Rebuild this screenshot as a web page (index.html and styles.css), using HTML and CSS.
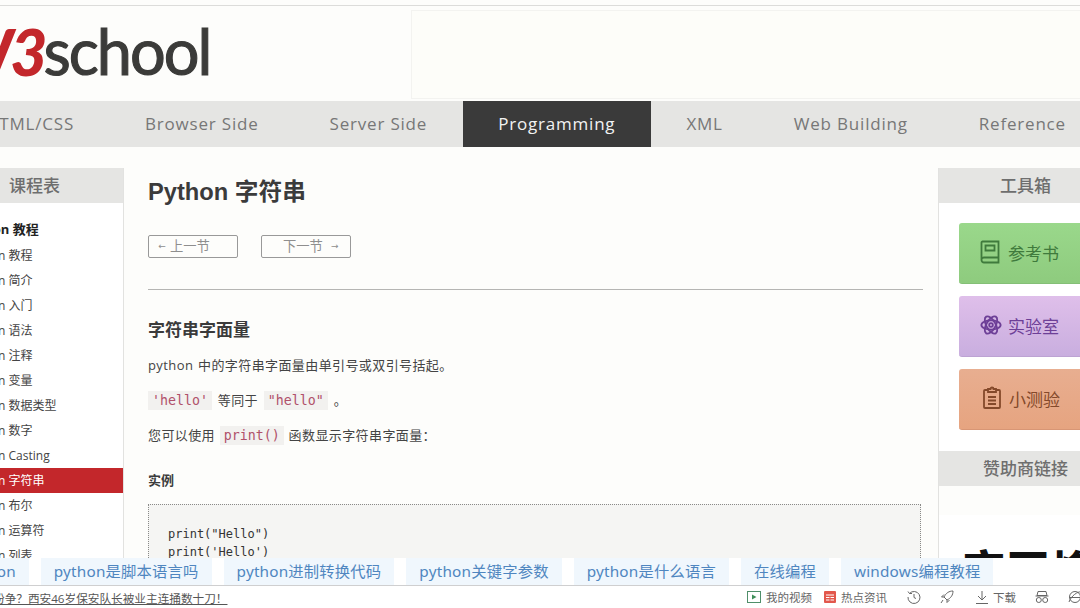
FILE: index.html
```html
<!DOCTYPE html>
<html lang="zh">
<head>
<meta charset="utf-8">
<title>Python 字符串</title>
<link rel="stylesheet" href="styles.css">
</head>
<body>
<div class="viewport">
  <div class="page">
    <header class="masthead">
      <div class="logo"><span class="logo-mark">W3</span><span class="logo-word">school</span></div>
      <div class="ad-top"></div>
    </header>
    <nav class="nav">
      <a>HTML/CSS</a><a>Browser Side</a><a>Server Side</a><a class="on">Programming</a><a>XML</a><a>Web Building</a><a>Reference</a>
    </nav>
    <div class="columns">
      <aside class="left">
        <h2 class="side-title left-title">课程表</h2>
        <ul class="lessons">
          <li class="head">Python 教程</li>
          <li>Python 教程</li>
          <li>Python 简介</li>
          <li>Python 入门</li>
          <li>Python 语法</li>
          <li>Python 注释</li>
          <li>Python 变量</li>
          <li>Python 数据类型</li>
          <li>Python 数字</li>
          <li>Python Casting</li>
          <li class="current">Python 字符串</li>
          <li>Python 布尔</li>
          <li>Python 运算符</li>
          <li>Python 列表</li>
        </ul>
      </aside>
      <main class="content">
        <h1>Python 字符串</h1>
        <div class="pager">
          <a class="btn prev"><span class="arrow">←</span>上一节</a>
          <a class="btn next">下一节<span class="arrow">→</span></a>
        </div>
        <hr class="rule">
        <h2 class="section">字符串字面量</h2>
        <p class="p1">python 中的字符串字面量由单引号或双引号括起。</p>
        <p class="p2"><code>'hello'</code> 等同于 <code>"hello"</code> 。</p>
        <p>您可以使用 <code>print()</code> 函数显示字符串字面量：</p>
        <h3 class="example">实例</h3>
        <pre class="sample">print("Hello")
print('Hello')</pre>
      </main>
      <aside class="right">
        <h2 class="side-title toolbox">工具箱</h2>
        <div class="tools">
          <a class="tool green">
            <svg viewBox="0 0 20 24" class="ico"><path d="M1.500 20V2.500a1 1 0 0 1 1-1h16v21H4a2.500 2.500 0 0 1-2.500-2.500a2.500 2.500 0 0 1 2.500-2.500h14.500M5.500 5.500h9v5h-9z"/></svg>参考书</a>
          <a class="tool purple">
            <svg viewBox="0 0 24 24" class="ico atom"><ellipse cx="12" cy="12" rx="10.500" ry="5"/><ellipse cx="12" cy="12" rx="10.500" ry="5" transform="rotate(60 12 12)"/><ellipse cx="12" cy="12" rx="10.500" ry="5" transform="rotate(120 12 12)"/><circle cx="12" cy="12" r="2"/></svg>实验室</a>
          <a class="tool orange">
            <svg viewBox="0 0 20 24" class="ico clip"><path d="M6 4H3a1 1 0 0 0-1 1v16a1 1 0 0 0 1 1h14a1 1 0 0 0 1-1V5a1 1 0 0 0-1-1h-3M6 6V3h2.500a1.500 1.500 0 0 1 3 0H14v3zM6 11h8M6 14.500h8M6 18h8"/></svg>小测验</a>
        </div>
        <h2 class="side-title sponsor">赞助商链接</h2>
        <div class="ad-side">宝玉烽</div>
      </aside>
    </div>
  </div>
  <div class="chips">
    <a class="chip">python</a><a class="chip">python是脚本语言吗</a><a class="chip">python进制转换代码</a><a class="chip">python关键字参数</a><a class="chip">python是什么语言</a><a class="chip">在线编程</a><a class="chip">windows编程教程</a>
  </div>
  <footer class="status">
    <a class="headline">纷争？西安46岁保安队长被业主连捅数十刀！</a>
    <div class="status-tools">
      <span class="st video"><svg viewBox="0 0 14 14" class="st-ico"><rect x=".5" y="1.500" width="13" height="11"/><path class="fill-green" d="M5 4.500l4.500 2.500L5 9.500z"/></svg>我的视频</span>
      <span class="st news"><svg viewBox="0 0 12 12" class="st-ico"><rect class="fill-red" width="12" height="12" rx="1"/><path class="cut" d="M2 4h8M2 6.500h3.500M6.500 6.500H10M2 9h3.500M6.500 9H10"/></svg>热点资讯</span>
      <svg viewBox="0 0 14 14" class="st-ico clock"><path d="M2.500 3.500A6 6 0 1 1 1 7M1 1.500l1.500 2L5 3.500M7 4v3.500l2 1"/></svg>
      <svg viewBox="0 0 14 14" class="st-ico rocket"><path d="M13 1C9 1 6 3 4 7l3 3c4-2 6-5 6-9zM4 7H1.500L4 4.500M7 10v2.500L9.500 10M3 10l-2 3"/></svg>
      <span class="st dl"><svg viewBox="0 0 12 13" class="st-ico"><path d="M6 0v9M2 5l4 4 4-4M0 12.500h12"/></svg>下载</span>
      <svg viewBox="0 0 14 14" class="st-ico glasses"><path d="M3 1.500h8l1 4H2zM0.500 6h13"/><circle cx="3.800" cy="10" r="2.500"/><circle cx="10.200" cy="10" r="2.500"/></svg>
      <svg viewBox="0 0 14 14" class="st-ico last"><circle cx="7" cy="7" r="5.500"/><path d="M1.500 7.500h11M13 2C10 1 3 6 1 12"/></svg>
    </div>
  </footer>
</div>
</body>
</html>
```
FILE: styles.css
```css
* { box-sizing: border-box; }
html, body { margin: 0; padding: 0; height: 100%; overflow: hidden; }
body { background: #fdfdfb; color: #3b3b3b; font-family: "Open Sans", "Noto Sans CJK SC", sans-serif; }
a { color: inherit; text-decoration: none; }
h1, h2, h3, p, ul, pre { margin: 0; padding: 0; }

.viewport { width: 1080px; height: 608px; display: flex; flex-direction: column; overflow: hidden; }
.page { flex: 1; min-height: 0; overflow: hidden; width: 1152px; margin-left: -37px; padding-top: 5px; }

.masthead { display: flex; height: 96px; border-top: 1px solid #dcdcda; }
.logo { width: 448px; height: 95px; display: flex; align-items: center; white-space: nowrap; font-family: "Lato", "Liberation Sans", sans-serif; }
.logo-mark { font-size: 64px; font-weight: 900; font-style: italic; color: #c3272b; letter-spacing: -3px; margin: -4px 0 0 -12px; }
.logo-word { font-size: 63px; font-weight: 400; color: #3b3b39; letter-spacing: -2px; margin-left: -1px; margin-top: -7px; -webkit-text-stroke: 1.100px #3b3b39; }
.ad-top { flex: 1; height: 89px; margin-top: 4px; border: 1px solid #f3f3f0; background: #fdfdf9; }

.nav { height: 46px; background: #e5e5e3; display: flex; font-size: 17px; letter-spacing: .8px; color: #777; }
.nav a { padding: 0 35.500px; line-height: 46px; white-space: nowrap; }
.nav a:first-child { padding-left: 23px; }
.nav a.on { background: #3a3a3a; color: #f2f2f2; }

.columns { display: flex; padding-top: 21px; }
.left { width: 161px; flex: none; border-right: 1px solid #e2e2e0; background: #fdfdfb; height: 420px; }
.side-title { height: 35px; line-height: 35px; background: #e5e5e3; font-size: 17px; font-weight: 500; color: #6e6e6e; }
.left-title { padding-left: 46px; }
.toolbox { padding-left: 61px; }
.sponsor { padding-left: 44px; }
.lessons { list-style: none; padding-top: 14px; font-size: 12px; color: #444; background: #fff; height: 385px; }
.lessons li { height: 25px; line-height: 25px; white-space: nowrap; padding-left: 3px; }
.lessons .head { font-weight: 700; font-size: 13px; color: #222; height: 26px; line-height: 24px; padding-left: 0; }
.lessons .current { background: #c3272b; color: #fff; }

.content { width: 775px; margin-left: 24px; flex: none; font-size: 13px; letter-spacing: .4px; word-spacing: 1px; }
.content h1 { font-family: "Liberation Sans", "Noto Sans CJK SC", sans-serif; font-size: 23.700px; line-height: 32px; font-weight: 700; color: #3b3b3b; margin-top: 8px; letter-spacing: 0; word-spacing: 0; }
.pager { display: flex; gap: 23px; margin-top: 27px; }
.btn { width: 90px; height: 23px; line-height: 21px; border: 1px solid #999; border-radius: 2px; font-size: 13.300px; color: #8e8e8e; letter-spacing: 0; display: flex; align-items: center; padding-left: 9px; }
.next { padding-left: 21px; }
.arrow { font-size: 9px; width: 8px; text-align: center; overflow: hidden; font-family: "DejaVu Sans", sans-serif; }
.prev .arrow { margin-right: 4px; }
.next .arrow { margin-left: 8px; }
.rule { border: 0; border-top: 1px solid #b5b5b3; margin: 31px 0 0; }
.section { font-size: 17px; line-height: 24px; font-weight: 700; color: #3b3b3b; margin-top: 28px; letter-spacing: 0; word-spacing: 0; }
.content p { line-height: 20px; margin-top: 14px; color: #444; }
.content .p1 { margin-top: 13px; }
.content .p2 { margin-top: 15px; word-spacing: 2px; }
code { font-family: "DejaVu Sans Mono", monospace; font-size: 13.300px; letter-spacing: 0; word-spacing: 0; color: #b0506a; background: #f2f1ef; padding: 2px 4px; }
.example { font-size: 13px; font-weight: 700; line-height: 20px; margin-top: 24px; color: #3b3b3b; letter-spacing: 0; }
.sample { width: 773px; height: 90px; margin-top: 14px; padding: 19.500px 19px; border: 1px dotted #8a8a88; background: #f5f5f3; font-family: "DejaVu Sans Mono", monospace; font-size: 12px; line-height: 18px; letter-spacing: 0; word-spacing: 0; color: #333; }

.right { width: 192px; margin-left: 15px; flex: none; border-left: 1px solid #e2e2e0; }
.tools { padding: 20px 20px 21px; display: flex; flex-direction: column; gap: 12px; background: #fff; }
.tool { height: 61px; border-radius: 3px; display: flex; align-items: center; padding: 0 0 2px 21px; font-size: 17px; gap: 8px; }
.ico { width: 20px; height: 24px; fill: none; stroke: currentColor; stroke-width: 1.800; flex: none; }
.atom { width: 22px; margin-right: -2px; stroke-width: 2; }
.clip { margin-left: 2px; margin-right: -1px; }
.green { background: linear-gradient(#9ad88b, #8ecb7e); color: #3f7a3c; border-bottom: 1px solid #84bf76; }
.purple { background: linear-gradient(#dfbfea, #c9aedf); color: #6d3f97; border-bottom: 1px solid #bda3d3; }
.orange { background: linear-gradient(#e8ae90, #e6a480); color: #84492a; border-bottom: 1px solid #d89675; }
.ad-side { margin-top: 29px; height: 60px; background: #fff; padding: 34px 0 0 23px; font-size: 44px; font-weight: 900; line-height: 44px; color: #111; white-space: nowrap; letter-spacing: 0; }

.chips { flex: none; height: 28px; background: #fff; border-bottom: 1px solid #cfcfd0; display: flex; gap: 12px; margin-left: -49px; white-space: nowrap; font-size: 15.300px; letter-spacing: .2px; color: #4f86c0; font-family: "Noto Sans", "Noto Sans CJK SC", sans-serif; }
.chip { background: #f0f7fd; padding: 0 13px; line-height: 27px; flex: none; }

.status { flex: none; height: 22px; background: #fff; display: flex; justify-content: space-between; font-size: 11.500px; color: #666; white-space: nowrap; }
.headline { margin-left: -7px; line-height: 25px; font-size: 11.650px; color: #555; text-decoration: underline; }
.status-tools { display: flex; align-items: center; }
.st { display: flex; align-items: center; gap: 5px; }
.st-ico { width: 14px; height: 14px; fill: none; stroke: #666; stroke-width: 1; flex: none; }
.video { margin-right: 12px; }
.video .st-ico rect { stroke: #4f8f6a; }
.fill-green { fill: #3f8f5a; stroke: none; }
.news { margin-right: 20px; }
.news .st-ico { width: 12px; height: 12px; }
.fill-red { fill: #e2574c; stroke: none; }
.cut { stroke: #fff; }
.clock { margin-right: 19px; }
.rocket { margin-right: 22px; }
.dl { margin-right: 19px; }
.dl .st-ico { width: 12px; height: 13px; }
.glasses { margin-right: 19px; }
.last { margin-right: -2px; }
```
